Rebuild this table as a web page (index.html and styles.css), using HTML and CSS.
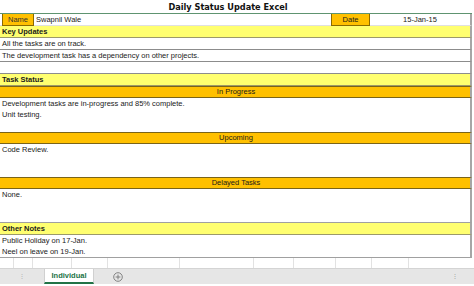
FILE: index.html
```html
<!DOCTYPE html>
<html>
<head>
<meta charset="utf-8">
<link rel="stylesheet" href="styles.css">
</head>
<body>
<div class="sheet">
  <div class="title">Daily Status Update Excel</div>
  <div class="row name-row">
    <div class="label name-label">Name</div>
    <div class="val name-val">Swapnil Wale</div>
    <div class="label date-label">Date</div>
    <div class="val date-val">15-Jan-15</div>
  </div>
  <div class="row section">Key Updates</div>
  <div class="row line">All the tasks are on track.</div>
  <div class="row line">The development task has a dependency on other projects.</div>
  <div class="row line"></div>
  <div class="row section">Task Status</div>
  <div class="row sub">In Progress</div>
  <div class="row txt">Development tasks are in-progress and 85% complete.</div>
  <div class="row txt">Unit testing.</div>
  <div class="row txt last"></div>
  <div class="row sub">Upcoming</div>
  <div class="row txt">Code Review.</div>
  <div class="row txt"></div>
  <div class="row txt last"></div>
  <div class="row sub">Delayed Tasks</div>
  <div class="row txt">None.</div>
  <div class="row txt"></div>
  <div class="row txt last gray"></div>
  <div class="row section">Other Notes</div>
  <div class="row txt">Public Holiday on 17-Jan.</div>
  <div class="row txt last gray">Neel on leave on 19-Jan.</div>
  <div class="grid-row">
    <span style="width:14px"></span><span style="width:19px"></span><span style="width:39px"></span><span style="width:36px"></span><span style="width:72px"></span><span style="width:74px"></span><span style="width:40px"></span><span style="width:42px"></span><span style="width:36px"></span><span style="width:37px"></span>
  </div>
  <div class="tabbar">
    <div class="nav">⋮</div>
    <div class="tab">Individual</div>
    <div class="add">
      <svg width="10" height="10" viewBox="0 0 10 10"><circle cx="5" cy="5" r="4.3" fill="none" stroke="#777" stroke-width="0.9"/><path d="M5 2.6V7.4M2.6 5H7.4" stroke="#777" stroke-width="0.9"/></svg>
    </div>
    <div class="spacer"></div>
    <div class="dots">⋮</div>
  </div>
</div>
</body>
</html>
```
FILE: styles.css
```css
html, body {
  margin: 0;
  padding: 0;
  background: #fff;
}
.sheet {
  width: 474px;
  height: 286px;
  display: flex;
  flex-direction: column;
  font-family: "Liberation Sans", Arial, sans-serif;
  font-size: 7.5px;
  color: #1a1a1a;
  overflow: hidden;
}
.title {
  height: 13px;
  border-bottom: 1px solid #5e9470;
  font-family: "DejaVu Sans", sans-serif;
  font-weight: bold;
  font-size: 8.2px;
  text-align: center;
  line-height: 14px;
  color: #111;
  margin-right: 2px;
  padding-right: 16px;
}
.row {
  box-sizing: border-box;
  height: 12px;
  line-height: 11px;
  padding-left: 2px;
  margin-right: 2px;
  border-right: 2px solid #a6a6a6;
  white-space: nowrap;
}
.name-row {
  display: flex;
  padding-left: 0;
  border-bottom: 1px solid #e0e0e0;
}
.label {
  box-sizing: border-box;
  background: #ffc000;
  border: 1px solid #8a6a00;
  border-top: none;
  text-align: center;
  height: 12px;
  line-height: 11px;
}
.name-label {
  margin-left: 2px;
  width: 32px;
  color: #333;
}
.name-val {
  flex: 1;
  padding-left: 2px;
}
.date-label {
  width: 39px;
}
.date-val {
  width: 100px;
  text-align: center;
}
.section {
  background: #ffff70;
  font-weight: bold;
  border-bottom: 1px solid #9c9a6a;
}
.line {
  border-bottom: 1px solid #8c8c8c;
}
.sub {
  background: #ffc000;
  border-top: 1px solid #7a6418;
  border-bottom: 1px solid #7a6418;
  text-align: center;
  line-height: 10px;
}
.txt {
  height: 11px;
  line-height: 11px;
}
.txt.last {
  height: 12px;
}
.txt.gray {
  border-bottom: 1px solid #a0a0a0;
}
.grid-row {
  height: 10px;
  display: flex;
  border-bottom: 1px solid #d4d4d4;
}
.grid-row span {
  box-sizing: border-box;
  height: 10px;
  border-right: 1px solid #e2e2e2;
}
.tabbar {
  height: 15px;
  background: #e6e6e6;
  display: flex;
  align-items: stretch;
  border-bottom: 2px solid #fff;
}
.nav {
  width: 44px;
  color: #aaa;
  font-size: 6px;
  line-height: 15px;
  text-align: center;
}
.tab {
  width: 50px;
  background: #fff;
  color: #217346;
  font-weight: bold;
  font-size: 7.5px;
  text-align: center;
  line-height: 14px;
  box-sizing: border-box;
  border-bottom: 2px solid #217346;
  border-left: 1px solid #d0d0d0;
  border-right: 1px solid #d0d0d0;
}
.add {
  width: 48px;
  display: flex;
  align-items: center;
  justify-content: center;
}
.spacer {
  flex: 1;
}
.dots {
  width: 22px;
  color: #999;
  font-size: 6px;
  line-height: 15px;
}
```
